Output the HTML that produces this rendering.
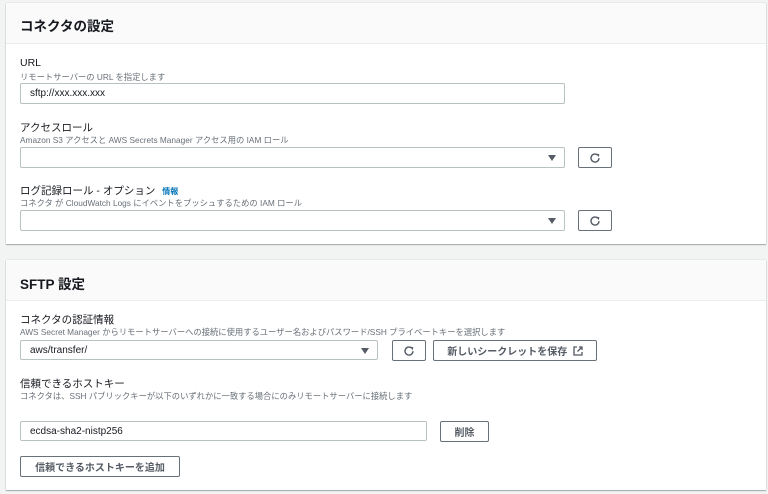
<!DOCTYPE html><html><head><meta charset="utf-8"><style>
*{box-sizing:border-box;margin:0;padding:0}
body{width:768px;height:494px;background:#f2f3f3;font-family:"Liberation Sans","Noto Sans CJK JP",sans-serif;position:relative;overflow:hidden;color:#16191f}
.card{position:absolute;left:6px;width:760px;background:#fff;box-shadow:0 1px 1px rgba(0,0,0,.3),0 0 1px rgba(0,0,0,.2)}
.hd{background:#fafafa;border-bottom:1px solid #eaeded;position:absolute;left:0;right:0;top:0}
.t{position:absolute;font-size:13.5px;font-weight:bold}
.lb{font-size:10.5px;position:absolute;left:14px}
.ds{font-size:8.3px;color:#687078;position:absolute;left:14px;white-space:nowrap}
.in{position:absolute;border:1px solid #b8c2c3;border-radius:2px;background:#fff;font-size:10px;padding:0 9px;display:flex;align-items:center}
.arr{position:absolute;right:8px;top:7px;width:0;height:0;border-left:4px solid transparent;border-right:4px solid transparent;border-top:6px solid #545b64}
.btn{position:absolute;border:1px solid #687078;border-radius:2px;background:#fff;font-size:10px;font-weight:bold;color:#545b64;display:flex;align-items:center;justify-content:center}
</style></head><body>
<svg width="0" height="0" style="position:absolute"><symbol id="r" viewBox="0 0 12 12"><path d="M10 6.2A4 4 0 1 1 8.6 3" fill="none" stroke="#545b64" stroke-width="1.4"/><path d="M7.3 1.6L10.4 2.2 9.6 5.2Z" fill="#545b64"/></symbol></svg>
<div class="card" style="top:3px;height:241px">
<div class="hd" style="height:41px"></div>
<div class="t" style="left:14px;top:12px">コネクタの設定</div>
<div class="lb" style="top:54px">URL</div>
<div class="ds" style="top:68px">リモートサーバーの URL を指定します</div>
<div class="in" style="left:14px;top:80px;width:545px;height:21px">sftp://xxx.xxx.xxx</div>
<div class="lb" style="top:117px">アクセスロール</div>
<div class="ds" style="top:131px">Amazon S3 アクセスと AWS Secrets Manager アクセス用の IAM ロール</div>
<div class="in" style="left:14px;top:144px;width:545px;height:21px"><div class="arr"></div></div>
<div class="btn" style="left:572px;top:144px;width:34px;height:21px"><svg width="12" height="12"><use href="#r"/></svg></div>
<div class="lb" style="top:180px">ログ記録ロール - オプション <span style="color:#0073bb;font-size:8px;font-weight:bold;margin-left:4px">情報</span></div>
<div class="ds" style="top:194px">コネクタ が CloudWatch Logs にイベントをプッシュするための IAM ロール</div>
<div class="in" style="left:14px;top:207px;width:545px;height:21px"><div class="arr"></div></div>
<div class="btn" style="left:572px;top:207px;width:34px;height:21px"><svg width="12" height="12"><use href="#r"/></svg></div>
</div>
<div class="card" style="top:260px;height:230px">
<div class="hd" style="height:41px"></div>
<div class="t" style="left:14px;top:13px">SFTP 設定</div>
<div class="lb" style="top:52px">コネクタの認証情報</div>
<div class="ds" style="top:66px">AWS Secret Manager からリモートサーバーへの接続に使用するユーザー名およびパスワード/SSH プライベートキーを選択します</div>
<div class="in" style="left:14px;top:80px;width:358px;height:20px">aws/transfer/<div class="arr"></div></div>
<div class="btn" style="left:386px;top:80px;width:34px;height:21px"><svg width="12" height="12"><use href="#r"/></svg></div>
<div class="btn" style="left:427px;top:80px;width:164px;height:21px">新しいシークレットを保存&nbsp;&nbsp;<svg width="10" height="10" viewBox="0 0 10 10"><path d="M4 1H1V9H9V6M6 1H9V4M9 1L4.5 5.5" fill="none" stroke="#545b64" stroke-width="1.3"/></svg></div>
<div class="lb" style="top:116px">信頼できるホストキー</div>
<div class="ds" style="top:130px">コネクタは、SSH パブリックキーが以下のいずれかに一致する場合にのみリモートサーバーに接続します</div>
<div class="in" style="left:14px;top:161px;width:407px;height:20px">ecdsa-sha2-nistp256</div>
<div class="btn" style="left:434px;top:161px;width:49px;height:21px">削除</div>
<div class="btn" style="left:14px;top:196px;width:160px;height:21px">信頼できるホストキーを追加</div>
</div>
</body></html>
